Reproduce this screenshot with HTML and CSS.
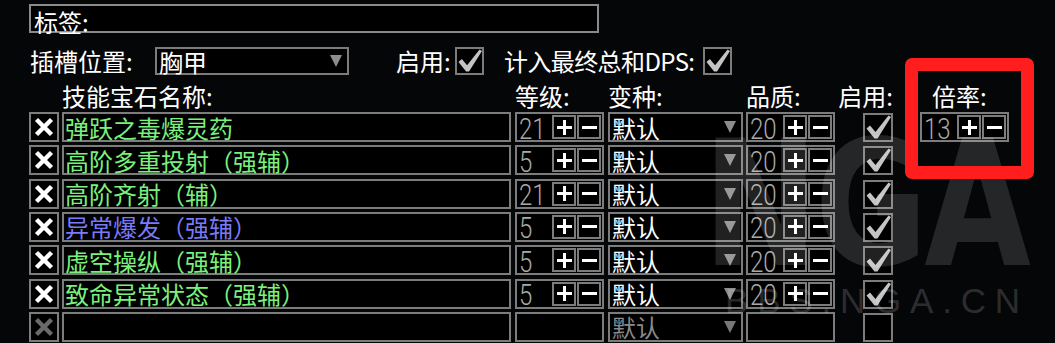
FILE: index.html
```html
<!DOCTYPE html>
<html>
<head>
<meta charset="utf-8">
<link rel="stylesheet" href="styles.css">
</head>
<body>
<div class="page">
  <div class="tag-box">标签:</div>

  <div class="slot-row">
    <span class="lbl slot-lbl">插槽位置:</span>
    <div class="select slot-select"><span class="sel-text">胸甲</span><span class="arrow"></span></div>
    <span class="lbl en-lbl">启用:</span>
    <span class="check slot-check"><svg viewBox="0 0 26 25"><polygon points="1.5,13.5 5,10.5 10.5,17 23.5,0.5 26,2 12.5,23.5 9.5,23.5"/></svg></span>
    <span class="lbl dps-lbl">计入最终总和DPS:</span>
    <span class="check slot-check"><svg viewBox="0 0 26 25"><polygon points="1.5,13.5 5,10.5 10.5,17 23.5,0.5 26,2 12.5,23.5 9.5,23.5"/></svg></span>
  </div>

  <div class="head-row">
    <span class="c-x"></span>
    <span class="c-name">技能宝石名称:</span>
    <span class="c-lvl">等级:</span>
    <span class="c-var">变种:</span>
    <span class="c-q">品质:</span>
    <span class="c-en h-en"><span>启用:</span></span>
    <span class="c-mult h-mult">倍率:</span>
  </div>

  <div class="gems">
    <div class="gem">
      <span class="c-x xbtn"><svg viewBox="0 0 26 26"><path d="M5.5 5.5L20.5 20.5M20.5 5.5L5.5 20.5"/></svg></span>
      <span class="c-name box name green">弹跃之毒爆灵药</span>
      <span class="c-lvl box num"><span class="n">21</span><span class="pm"><span class="b plus"></span><span class="b minus"></span></span></span>
      <span class="c-var box select"><span class="sel-text">默认</span><span class="arrow"></span></span>
      <span class="c-q box num"><span class="n">20</span><span class="pm"><span class="b plus"></span><span class="b minus"></span></span></span>
      <span class="c-en check"><svg viewBox="0 0 26 25"><polygon points="1.5,13.5 5,10.5 10.5,17 23.5,0.5 26,2 12.5,23.5 9.5,23.5"/></svg></span>
      <span class="c-mult box num"><span class="n">13</span><span class="pm"><span class="b plus"></span><span class="b minus"></span></span></span>
    </div>
    <div class="gem">
      <span class="c-x xbtn"><svg viewBox="0 0 26 26"><path d="M5.5 5.5L20.5 20.5M20.5 5.5L5.5 20.5"/></svg></span>
      <span class="c-name box name green">高阶多重投射（强辅）</span>
      <span class="c-lvl box num"><span class="n">5</span><span class="pm"><span class="b plus"></span><span class="b minus"></span></span></span>
      <span class="c-var box select"><span class="sel-text">默认</span><span class="arrow"></span></span>
      <span class="c-q box num"><span class="n">20</span><span class="pm"><span class="b plus"></span><span class="b minus"></span></span></span>
      <span class="c-en check"><svg viewBox="0 0 26 25"><polygon points="1.5,13.5 5,10.5 10.5,17 23.5,0.5 26,2 12.5,23.5 9.5,23.5"/></svg></span>
    </div>
    <div class="gem">
      <span class="c-x xbtn"><svg viewBox="0 0 26 26"><path d="M5.5 5.5L20.5 20.5M20.5 5.5L5.5 20.5"/></svg></span>
      <span class="c-name box name green">高阶齐射（辅）</span>
      <span class="c-lvl box num"><span class="n">21</span><span class="pm"><span class="b plus"></span><span class="b minus"></span></span></span>
      <span class="c-var box select"><span class="sel-text">默认</span><span class="arrow"></span></span>
      <span class="c-q box num"><span class="n">20</span><span class="pm"><span class="b plus"></span><span class="b minus"></span></span></span>
      <span class="c-en check"><svg viewBox="0 0 26 25"><polygon points="1.5,13.5 5,10.5 10.5,17 23.5,0.5 26,2 12.5,23.5 9.5,23.5"/></svg></span>
    </div>
    <div class="gem">
      <span class="c-x xbtn"><svg viewBox="0 0 26 26"><path d="M5.5 5.5L20.5 20.5M20.5 5.5L5.5 20.5"/></svg></span>
      <span class="c-name box name blue">异常爆发（强辅）</span>
      <span class="c-lvl box num"><span class="n">5</span><span class="pm"><span class="b plus"></span><span class="b minus"></span></span></span>
      <span class="c-var box select"><span class="sel-text">默认</span><span class="arrow"></span></span>
      <span class="c-q box num"><span class="n">20</span><span class="pm"><span class="b plus"></span><span class="b minus"></span></span></span>
      <span class="c-en check"><svg viewBox="0 0 26 25"><polygon points="1.5,13.5 5,10.5 10.5,17 23.5,0.5 26,2 12.5,23.5 9.5,23.5"/></svg></span>
    </div>
    <div class="gem">
      <span class="c-x xbtn"><svg viewBox="0 0 26 26"><path d="M5.5 5.5L20.5 20.5M20.5 5.5L5.5 20.5"/></svg></span>
      <span class="c-name box name green">虚空操纵（强辅）</span>
      <span class="c-lvl box num"><span class="n">5</span><span class="pm"><span class="b plus"></span><span class="b minus"></span></span></span>
      <span class="c-var box select"><span class="sel-text">默认</span><span class="arrow"></span></span>
      <span class="c-q box num"><span class="n">20</span><span class="pm"><span class="b plus"></span><span class="b minus"></span></span></span>
      <span class="c-en check"><svg viewBox="0 0 26 25"><polygon points="1.5,13.5 5,10.5 10.5,17 23.5,0.5 26,2 12.5,23.5 9.5,23.5"/></svg></span>
    </div>
    <div class="gem">
      <span class="c-x xbtn"><svg viewBox="0 0 26 26"><path d="M5.5 5.5L20.5 20.5M20.5 5.5L5.5 20.5"/></svg></span>
      <span class="c-name box name green">致命异常状态（强辅）</span>
      <span class="c-lvl box num"><span class="n">5</span><span class="pm"><span class="b plus"></span><span class="b minus"></span></span></span>
      <span class="c-var box select"><span class="sel-text">默认</span><span class="arrow"></span></span>
      <span class="c-q box num"><span class="n">20</span><span class="pm"><span class="b plus"></span><span class="b minus"></span></span></span>
      <span class="c-en check"><svg viewBox="0 0 26 25"><polygon points="1.5,13.5 5,10.5 10.5,17 23.5,0.5 26,2 12.5,23.5 9.5,23.5"/></svg></span>
    </div>
    <div class="gem empty">
      <span class="c-x xbtn off"><svg viewBox="0 0 26 26"><path d="M5.5 5.5L20.5 20.5M20.5 5.5L5.5 20.5"/></svg></span>
      <span class="c-name box name"></span>
      <span class="c-lvl box num"></span>
      <span class="c-var box select off"><span class="sel-text">默认</span><span class="arrow"></span></span>
      <span class="c-q box num"></span>
      <span class="c-en check"></span>
    </div>
  </div>

  <div class="watermark">
    <div class="wm-big">NGA</div>
    <div class="wm-small">BBS.NGA.CN</div>
  </div>

  <div class="highlight"></div>
</div>
</body>
</html>
```

FILE: styles.css
```css
html, body {
  margin: 0;
  padding: 0;
}
body {
  width: 1055px;
  height: 343px;
  overflow: hidden;
  background: #050608;
  color: #ffffff;
  font-family: "Noto Sans CJK SC", "Noto Sans", sans-serif;
  font-size: 24px;
  line-height: 24px;
}
.page {
  position: relative;
  height: 343px;
  box-sizing: border-box;
  padding: 4px 0 0 29px;
}

/* generic boxes */
.box, .tag-box, .select, .check, .xbtn, .b {
  box-sizing: border-box;
  border: 2px solid #7c7c7c;
  background: #000;
}

.tag-box {
  width: 570px;
  height: 29px;
  padding: 4px 0 0 3px;
  border-color: #8a8a8a;
}

/* slot row */
.slot-row {
  display: flex;
  align-items: center;
  height: 28px;
  margin-top: 14px;
}
.lbl {
  display: block;
  white-space: nowrap;
}
.slot-lbl { width: 126px; padding-left: 1px; box-sizing: border-box; }
.slot-select { width: 194px; height: 28px; }
.en-lbl { width: 59px; margin-left: 47px; }
.dps-lbl { width: 199px; margin-left: 20px; letter-spacing: -0.6px; }

.select {
  display: flex;
  align-items: center;
  padding: 0 5px 0 2px;
}
.sel-text { padding-top: 1px; }
.arrow {
  margin-left: auto;
  width: 0;
  height: 0;
  border-left: 6.5px solid transparent;
  border-right: 6.5px solid transparent;
  border-top: 12px solid #8c8c8c;
}
.select.off .sel-text { color: #8a8a8a; }
.select.off .arrow { border-top-color: #777; }

.check {
  display: block;
  width: 30px;
  height: 29px;
}
.slot-check { width: 29px; height: 28px; }
.check svg {
  display: block;
  width: 100%;
  height: 100%;
  fill: #c4c4c4;
}

/* header row */
.head-row {
  display: flex;
  height: 28px;
  margin-top: 7px;
  align-items: center;
  white-space: nowrap;
}
.head-row > span { display: block; }
.h-en {
  display: flex !important;
  justify-content: flex-end;
}
.h-mult { padding-left: 12px; box-sizing: border-box; }

/* columns */
.c-x { width: 30px; margin-right: 3px; flex: none; }
.c-name { width: 449px; margin-right: 4px; flex: none; }
.c-lvl { width: 89px; margin-right: 4px; flex: none; }
.c-var { width: 135px; margin-right: 3px; flex: none; }
.c-q { width: 89px; margin-right: 28px; flex: none; }
.c-en { width: 30px; margin-right: 27px; flex: none; }
.c-mult { width: 89px; flex: none; }

/* gem rows */
.gems {
  margin-top: 2px;
  display: flex;
  flex-direction: column;
  gap: 3.33px;
}
.gem {
  display: flex;
  height: 30px;
}
.gem > span { height: 30px; }
.gem .check { height: 29px; margin-top: 1px; }

.xbtn { display: block; }
.xbtn svg {
  display: block;
  width: 26px;
  height: 26px;
  stroke: #ffffff;
  stroke-width: 4.4;
  fill: none;
}
.xbtn.off svg { stroke: #6a6a6a; }

.name {
  display: flex;
  align-items: center;
  padding: 1px 0 0 1px;
  white-space: nowrap;
}
.green { color: #7cf07c; }
.blue { color: #7a7af8; }

.num {
  display: flex;
  align-items: center;
  padding: 0 1px 0 2px;
}
.n {
  display: block;
  width: 30px;
  font-family: Roboto, "Noto Sans", sans-serif;
  font-weight: 300;
  font-size: 30px;
  line-height: 26px;
  color: #a9a9a9;
  padding-top: 3px;
  transform: scaleX(0.8);
  transform-origin: left center;
}
.pm {
  margin-left: auto;
  display: flex;
  gap: 1px;
}
.b {
  position: relative;
  display: block;
  width: 24px;
  height: 24px;
}
.b::before, .plus::after {
  content: "";
  position: absolute;
  background: #ffffff;
  left: 2.5px;
  top: 8.5px;
  width: 15px;
  height: 3px;
}
.plus::after {
  left: 8.5px;
  top: 2.5px;
  width: 3px;
  height: 15px;
}

/* annotation box */
.highlight {
  position: absolute;
  left: 905px;
  top: 58px;
  width: 129px;
  height: 121px;
  box-sizing: border-box;
  border: 13px solid #ff1d1d;
  border-radius: 7px;
}

/* watermark */
.watermark {
  position: absolute;
  left: 0;
  top: 0;
  width: 1055px;
  height: 343px;
  pointer-events: none;
}
.wm-big {
  position: absolute;
  left: 703px;
  top: 118px;
  font-family: "DejaVu Sans Condensed", "DejaVu Sans", sans-serif;
  font-weight: bold;
  font-size: 174px;
  line-height: 174px;
  color: rgba(255, 255, 255, 0.13);
  transform: scaleX(0.88);
  transform-origin: left top;
  letter-spacing: -4px;
}
.wm-small {
  position: absolute;
  left: 725px;
  top: 283px;
  font-family: "Liberation Sans", sans-serif;
  font-size: 35px;
  line-height: 35px;
  letter-spacing: 8.8px;
  color: rgba(255, 255, 255, 0.17);
}
```
